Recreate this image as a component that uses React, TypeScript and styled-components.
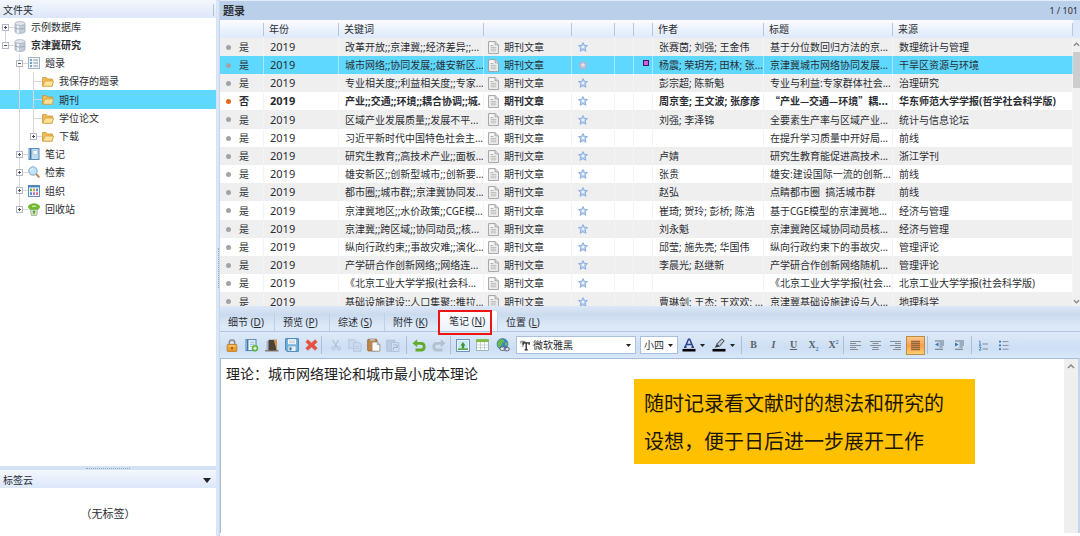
import React from 'react';
import styled, { createGlobalStyle, css } from 'styled-components';

const UI_FONT = '"Noto Sans", "Noto Sans CJK SC", sans-serif';
const CJK_FONT = '"Noto Sans CJK SC", "Noto Sans", sans-serif';

const color = {
  text: '#2b2d33',
  accent: '#5ed8fe',
  stripe: '#efefef',
  frame: '#c3d7ee',
  panel: '#bad0ea',
  bar: '#dbe8f7',
  line: '#aebfd6',
};

const GlobalStyle = createGlobalStyle`
  *, *::before, *::after { box-sizing: border-box; }
  body { margin: 0; background: #fff; color: ${color.text}; font: 10px/18px ${UI_FONT}; }
  button, select, textarea { font: inherit; color: inherit; border: 0; padding: 0; margin: 0; background: none; border-radius: 0; }
  svg { display: block; }
`;

/* ---------- frame ---------- */

const Shell = styled.div`
  display: grid;
  grid-template-columns: 216px 4px minmax(0, 1fr);
  min-height: 100vh;
`;

const Sidebar = styled.aside`
  display: flex;
  flex-direction: column;
  background: #fff;
`;

const PanelHeader = styled.header`
  display: flex;
  align-items: center;
  justify-content: space-between;
  height: 18px;
  padding: 2px 5px 0 3px;
  background: linear-gradient(#f3f7fd, #dce7fa);
`;

const PanelTitle = styled.h2`
  margin: 0;
  font-size: 10px;
  line-height: 16px;
  font-weight: 400;
`;

const HeaderTick = styled.span`
  width: 1px;
  height: 12px;
  margin-right: -3px;
  background: #b4c0d4;
`;

const VSplitter = styled.div`
  display: flex;
  align-items: center;
  justify-content: center;
  background: linear-gradient(90deg, #d3e1f2, #dfeaf8 50%, #bdd1ea);
`;

const VGrip = styled.span`
  width: 1px;
  height: 40px;
  border-left: 1px dotted #8fa9cc;
`;

const HSplitter = styled.div`
  display: flex;
  justify-content: center;
  align-items: center;
  height: 4px;
  background: #d3e2f3;
`;

const HGrip = styled.span<{ $w: number }>`
  width: ${(p) => p.$w}px;
  height: 1px;
  border-top: 1px dotted #8fa3c0;
`;

const Main = styled.main`
  display: flex;
  flex-direction: column;
  min-width: 0;
`;

/* ---------- tree ---------- */

const Tree = styled.ul`
  flex: 1;
  margin: 0;
  padding: 0;
  list-style: none;
`;

const TreeRow = styled.li<{ $selected?: boolean; $strong?: boolean }>`
  display: flex;
  align-items: center;
  height: 18px;
  font-weight: ${(p) => (p.$strong ? 700 : 400)};
  background: ${(p) => (p.$selected ? color.accent : 'transparent')};
  &:nth-child(5n) { height: 19px; }
`;

const vLine = 'linear-gradient(#d9d6e0, #d9d6e0) 5px 0 / 1px 100% no-repeat';
const vLineTop = 'linear-gradient(#d9d6e0, #d9d6e0) 5px 0 / 1px 50% no-repeat';
const vLineBottom = 'linear-gradient(#d9d6e0, #d9d6e0) 5px 100% / 1px 50% no-repeat';
const hLine = 'linear-gradient(#d9d6e0, #d9d6e0) 5px 50% / 9px 1px no-repeat';

const Guide = styled.span<{ $line?: boolean }>`
  width: 14px;
  height: 100%;
  background: ${(p) => (p.$line ? vLine : 'none')};
`;

const Branch = styled.span<{ $end?: boolean; $start?: boolean }>`
  display: flex;
  align-items: center;
  width: 14px;
  height: 100%;
  padding-left: 2px;
  background: ${(p) => (p.$end ? vLineTop : p.$start ? vLineBottom : vLine)}, ${hLine};
`;

const Toggle = styled.button`
  width: 7px;
  height: 7px;
`;

const TreeLabel = styled.span`
  display: flex;
  align-items: center;
  gap: 5px;
  white-space: nowrap;
`;

const TagMenu = styled.button`
  display: flex;
  align-items: center;
  width: 8px;
  height: 16px;
`;

const TagCloud = styled.div`
  height: 48px;
  padding-top: 17px;
  text-align: center;
  font-size: 11px;
  line-height: 18px;
`;

/* ---------- reference list ---------- */

const ListHeader = styled.header`
  display: flex;
  align-items: center;
  justify-content: space-between;
  height: 20px;
  padding: 1px 2px 0 3px;
  border-top: 1px solid #e3edf9;
  background: ${color.panel};
`;

const ListTitle = styled.h1`
  margin: 0;
  font-size: 11px;
  line-height: 18px;
  font-weight: 700;
`;

const Counter = styled.span`
  font-size: 9px;
`;

const ListPane = styled.section`
  display: flex;
  height: 286px;
  overflow: hidden;
`;

const ListTable = styled.table`
  flex: 1;
  width: 100%;
  min-width: 0;
  height: max-content;
  table-layout: fixed;
  border-collapse: separate;
  border-spacing: 0;
`;

const Col = styled.col<{ $w?: number }>`
  width: ${(p) => (p.$w ? `${p.$w}px` : 'auto')};
`;

const Th = styled.th`
  height: 18px;
  padding: 0 0 0 5px;
  text-align: left;
  font-weight: 400;
  line-height: 16px;
  white-space: nowrap;
  background: linear-gradient(90deg, #b9c6da, #b9c6da) 100% 3px / 1px 13px no-repeat,
    linear-gradient(#fbfcff, #dee9fb);
`;

const Tr = styled.tr<{ $selected?: boolean; $strong?: boolean }>`
  background: #fff;
  font-weight: ${(p) => (p.$strong ? 700 : 400)};
  &:nth-child(odd) { background: ${color.stripe}; }
  &:nth-child(5n) td { height: 19px; }
  ${(p) => p.$selected && css`
    && { background: ${color.accent}; }
    td { border-right-color: #a6e9fe; }
  `}
`;

const Td = styled.td<{ $wide?: boolean }>`
  height: 18px;
  padding: 0 0 0 6px;
  overflow: hidden;
  white-space: pre;
  border-right: 1px solid #f4f4f6;
  font-family: ${(p) => (p.$wide ? CJK_FONT : 'inherit')};
`;

const YearTd = styled(Td)`
  font-size: 11px;
`;

const StatusLine = styled.span`
  display: flex;
  align-items: center;
  gap: 8px;
`;

const Dot = styled.i<{ $hot?: boolean }>`
  width: 5px;
  height: 5px;
  border-radius: 50%;
  background: ${(p) => (p.$hot ? '#e8671c' : '#a3a3a5')};
`;

const TypeLine = styled.span`
  display: flex;
  align-items: center;
  gap: 5px;
  margin-left: -2px;
`;

const Flag = styled.i`
  display: block;
  width: 6px;
  height: 6px;
  margin: -4px 0 0 3px;
  border: 1px solid #3d1d63;
  background: #d65ae0;
`;

const ListScroll = styled.div`
  display: flex;
  flex-direction: column;
  align-items: center;
  justify-content: space-between;
  width: 7px;
  padding: 22px 0 2px;
  background: linear-gradient(#dee9fb, #dee9fb) 0 0 / 100% 18px no-repeat, #f0f0f0;
`;

const ListThumb = styled.span`
  width: 100%;
  height: 36px;
  margin: 5px 0 auto;
  background: #cdcdcd;
`;

/* ---------- tabs ---------- */

const Tabs = styled.nav`
  display: flex;
  align-items: flex-end;
  height: 26px;
  border-bottom: 1px solid #b3c6df;
  background: linear-gradient(#dce7f8, #cbdaee 35%, #dce9f8 80%);
`;

const Tab = styled.button<{ $active?: boolean }>`
  position: relative;
  flex: none;
  width: ${(p) => (p.$active ? 58 : 55)}px;
  height: 18px;
  padding-left: 8px;
  text-align: left;
  white-space: nowrap;
  line-height: 18px;
  border-right: 1px solid #c0cfe4;
  ${(p) => p.$active && css`
    height: 20px;
    padding-left: 9px;
    background: linear-gradient(#fff, #eaf2fc);
    border-radius: 2px 2px 0 0;
  `}
  &:last-of-type { border-right: 0; }
`;

const RedFrame = styled.span`
  position: absolute;
  left: -2px;
  top: -1px;
  width: 54px;
  height: 25px;
  border: 2px solid #ee1414;
  z-index: 1;
`;

/* ---------- toolbar ---------- */

const Toolbar = styled.div`
  display: flex;
  align-items: center;
  height: 26px;
  padding-left: 2px;
  background: linear-gradient(#dfeaf8, #cddff4 60%, #d8e7f8);
`;

const Group = styled.div<{ $tight?: boolean; $after?: number; $before?: number; $last?: boolean }>`
  display: flex;
  align-items: center;
  flex: none;
  gap: ${(p) => (p.$tight ? 0 : 1)}px;
  height: 18px;
  padding: 0 ${(p) => p.$after ?? 0}px 0 ${(p) => p.$before ?? 0}px;
  border-right: ${(p) => (p.$last ? '0' : '1px solid #aebfd8')};
`;

const Tool = styled.button<{ $on?: boolean }>`
  display: flex;
  align-items: center;
  justify-content: center;
  flex: none;
  width: 19px;
  height: 19px;
  ${(p) => p.$on && css`
    border: 1px solid #b98d45;
    background: linear-gradient(#fbc98a, #fb9d4a 50%, #ffcf6e);
  `}
`;

const DropTool = styled(Tool)`
  width: 29px;
  gap: 4px;
`;

const Glyph = styled.span<{ $italic?: boolean; $underline?: boolean }>`
  font: ${(p) => (p.$italic ? 'italic' : 'normal')} 700 10px/14px "Liberation Serif", serif;
  text-decoration: ${(p) => (p.$underline ? 'underline' : 'none')};
  color: #5a6068;
  sub, sup { font-size: 6px; line-height: 0; color: #4a7fb8; }
`;

const Combo = styled.label<{ $w: number; $gap: number }>`
  display: flex;
  align-items: center;
  gap: 3px;
  flex: none;
  width: ${(p) => p.$w}px;
  height: 18px;
  padding: 0 4px 0 3px;
  margin-right: ${(p) => p.$gap}px;
  border: 1px solid #a9c0df;
  background: #fff;
`;

const ComboSelect = styled.select`
  flex: 1;
  min-width: 0;
  height: 16px;
  line-height: 16px;
  appearance: none;
  outline: none;
`;

/* ---------- note editor ---------- */

const Editor = styled.section`
  position: relative;
  display: flex;
  flex: 1;
  min-height: 120px;
  margin-bottom: 3px;
  border: solid #a9bdd9;
  border-width: 1px 2px 0 1px;
  border-right-color: #c6d5e9;
`;

const NoteText = styled.textarea`
  flex: 1;
  min-width: 0;
  padding: 4px 5px;
  font-family: "Noto Sans CJK SC", sans-serif;
  font-size: 14px;
  line-height: 20px;
  color: #222;
  resize: none;
  outline: none;
  overflow: hidden;
`;

const NoteScroll = styled.div`
  display: flex;
  justify-content: center;
  width: 14px;
  padding-top: 5px;
  background: #efeff0;
`;

const Callout = styled.p`
  position: absolute;
  left: 413px;
  top: 20px;
  width: 341px;
  margin: 0;
  padding: 6px 10px 3px;
  background: #ffc000;
  color: #1c1600;
  font-size: 20px;
  line-height: 38px;
`;

/* ---------- icons ---------- */

const Caret = ({ size = 5 }: { size?: number }) => (
  <svg width={size} height={size === 5 ? 3 : 5} viewBox="0 0 6 4" preserveAspectRatio="none"><path d="M0 0h6L3 4z" fill="#222" /></svg>
);
const Chevron = ({ w, down }: { w: number; down?: boolean }) => (
  <svg width={w} height="5" viewBox="0 0 8 5" fill="none" stroke="#8b8b8b" strokeWidth="1.5">
    <path d={down ? 'M1 1l3 3 3-3' : 'M1 4l3-3 3 3'} />
  </svg>
);
const PlusMinus = ({ open }: { open?: boolean }) => (
  <svg width="7" height="7" viewBox="0 0 7 7">
    <rect x=".5" y=".5" width="6" height="6" fill="#fff" stroke="#b3b6c1" />
    <path d={open ? 'M2 3.5h3' : 'M2 3.5h3M3.5 2v3'} stroke="#4c5168" />
  </svg>
);
const Db = () => (
  <svg width="12" height="13" viewBox="0 0 12 13">
    <path d="M1 2.5v8c0 1 2.2 1.9 5 1.9s5-.9 5-1.9v-8z" fill="#c4cdd7" stroke="#98a5b3" strokeWidth=".7" />
    <path d="M3 4v8h2V4z" fill="#edf1f5" />
    <ellipse cx="6" cy="2.5" rx="5" ry="1.9" fill="#e4e9ee" stroke="#9ba8b6" strokeWidth=".7" />
    <path d="M1 6.7c1 1.7 9 1.7 10 0" fill="none" stroke="#96a3b2" strokeWidth=".9" />
  </svg>
);
const ListIcon = () => (
  <svg width="12" height="12" viewBox="0 0 12 12">
    <rect x=".5" y=".5" width="11" height="11" fill="#f4f8fb" stroke="#a2b4c4" />
    <path d="M2 3h2M2 6h2M2 9h2" stroke="#4784b5" strokeWidth="1.4" />
    <path d="M5.3 3H10M5.3 6H10M5.3 9H10" stroke="#7f94a7" />
  </svg>
);
const Folder = () => (
  <svg width="12" height="11" viewBox="0 0 12 11">
    <path d="M.6 10V1.6h3.6L5.4 3h5v7z" fill="#f1bd57" stroke="#c98e2f" strokeWidth=".8" />
    <path d="M.8 10.2L3 5h8.6l-1.5 5.2z" fill="#ffe49a" stroke="#d39d3c" strokeWidth=".8" />
  </svg>
);
const Notebook = () => (
  <svg width="12" height="12" viewBox="0 0 12 12">
    <rect x="1" y=".5" width="10" height="11" fill="#bddcf0" stroke="#5a8db8" />
    <path d="M2.7 1v10" stroke="#3f76a8" strokeWidth="1.4" />
    <rect x="5" y="2.5" width="4.5" height="4" fill="#f5fafd" stroke="#8fb5d2" strokeWidth=".5" />
  </svg>
);
const SearchIcon = () => (
  <svg width="12" height="12" viewBox="0 0 12 12">
    <path d="M7.7 7.7l3 3" stroke="#c09055" strokeWidth="2.2" strokeLinecap="round" />
    <circle cx="5" cy="5" r="4.2" fill="#bfe2f6" stroke="#85aac9" />
    <path d="M2.7 4.6c.3-1.2 1.2-1.8 2.3-1.9" stroke="#fff" fill="none" />
  </svg>
);
const Groups = () => (
  <svg width="12" height="12" viewBox="0 0 12 12">
    <rect x=".5" y=".5" width="11" height="11" fill="#f0f6fb" stroke="#5f8fbd" />
    <path d="M0 1.4h12" stroke="#4b84bb" strokeWidth="2" />
    <rect x="2" y="3.6" width="2" height="2.6" fill="#5bb455" /><rect x="5" y="3.6" width="2" height="2.6" fill="#e69a3c" /><rect x="8" y="3.6" width="2" height="2.6" fill="#5c93d8" />
    <rect x="2" y="7.3" width="2" height="2.6" fill="#5a86d8" /><rect x="5" y="7.3" width="2" height="2.6" fill="#b867c4" /><rect x="8" y="7.3" width="2" height="2.6" fill="#dd7063" />
  </svg>
);
const Bin = () => (
  <svg width="12" height="13" viewBox="0 0 12 13">
    <path d="M2.6 6h6.8l-.6 6.4H3.2z" fill="#dfe8da" stroke="#8aa27a" strokeWidth=".7" />
    <path d="M.4 3.6C.6 2.4 1.6 2 2.4 1.8 3.4.4 8.6.4 9.6 1.8c.8.2 1.8.6 2 1.8.2 1.6-1 2.6-2.4 2.6H2.8C1.4 6.200.200 5.200.400 3.600z" fill="#74bb33" stroke="#549b24" strokeWidth=".6" />
    <path d="M4 3.200h4" stroke="#d8f0bf" strokeWidth="1.200" />
    <path d="M6 7l2 2.300H4zM5.300 9h1.400v2.300H5.300z" fill="#58a527" />
  </svg>
);
const Doc = () => (
  <svg width="11" height="13" viewBox="0 0 11 13">
    <path d="M.6.6h6.5l3.3 3.2v8.6H.6z" fill="#f7f7f7" stroke="#979797" strokeWidth=".9" />
    <path d="M7 .6v3.3h3.4" fill="#ddd" stroke="#979797" strokeWidth=".8" />
    <path d="M2.500 4.500h3M2.500 6.300h6M2.500 8.100h6M2.500 9.900h6" stroke="#aaa" strokeWidth=".9" />
  </svg>
);
const Star = ({ pink }: { pink?: boolean }) => (
  <svg width="10" height="10" viewBox="0 0 10 10">
    <path d="M5 .6l1.400 2.700 3.100.300-2.200 2.200.600 3.500L5 7.700 2.100 9.300l.600-3.500L.500 3.600l3.100-.300z" fill={pink ? '#d8c6dc' : '#b3cdf1'} stroke={pink ? '#a9b4d2' : '#8fb0e0'} strokeWidth="1" strokeLinejoin="round" />
    <circle cx="5" cy="5" r="1.300" fill={pink ? '#efe2ea' : '#eef5ff'} />
  </svg>
);

const LockI = () => (
  <svg width="12" height="13" viewBox="0 0 12 13">
    <path d="M3.3 6V3.6a2.7 2.7 0 015.4 0V6" fill="none" stroke="#8f8a84" strokeWidth="1.5" />
    <rect x="1.2" y="5.4" width="9.6" height="7" rx=".7" fill="#efa02e" stroke="#b87319" strokeWidth=".8" />
    <path d="M1.8 7h8.4" stroke="#ffd27c" /><path d="M6 8v2.5" stroke="#7c4a10" strokeWidth="1.3" />
  </svg>
);
const AddNoteI = () => (
  <svg width="14" height="13" viewBox="0 0 14 13">
    <rect x="1" y=".6" width="10" height="11" fill="#e8f3fb" stroke="#5387b5" />
    <path d="M2.6 1v10.4" stroke="#3c78ad" strokeWidth="1.6" />
    <path d="M5 3.3h4.5M5 5.3h4.5M5 7.3h2" stroke="#87aecb" strokeWidth=".8" />
    <circle cx="10" cy="9.3" r="3.2" fill="#5db53a" /><path d="M10 7.5v3.6M8.2 9.3h3.6" stroke="#fff" strokeWidth="1.1" />
  </svg>
);
const DoorI = () => (
  <svg width="14" height="13" viewBox="0 0 14 13">
    <path d="M1.5 2h4v9h-4z" fill="#a9b6c6" /><path d="M3.5 .8h8v11h-8z" fill="#4c4239" />
    <path d="M8.8.8h3v11.5z" fill="#d5994d" /><path d="M0 11.8h13.5" stroke="#786755" strokeWidth="1.2" />
  </svg>
);
const SaveI = () => (
  <svg width="14" height="14" viewBox="0 0 14 14">
    <path d="M.7.7h12.6v12.6H2L.7 12z" fill="#79b3dc" stroke="#3a7db3" />
    <rect x="3" y="1.2" width="8" height="5" fill="#f7fafc" /><path d="M4 3h6M4 4.7h6" stroke="#a2b9c9" strokeWidth=".7" />
    <rect x="3.4" y="8.4" width="7.2" height="4.6" fill="#e7f0f6" /><rect x="4.5" y="9.3" width="2" height="3" fill="#3a6f9e" />
  </svg>
);
const DeleteI = () => (
  <svg width="13" height="12" viewBox="0 0 14 13">
    <path d="M3 .8L7 4.3 11 .8l2.2 2.500L9.6 6.5l3.6 3.3-2.3 2.5L7 8.8l-4 3.5L.8 9.8l3.6-3.3L.8 3.2z" fill="#e8513f" stroke="#d2493a" strokeWidth=".6" />
  </svg>
);
const CutI = () => (
  <svg width="12" height="12" viewBox="0 0 12 12" fill="none" stroke="#b2c2d8">
    <path d="M2.5 1l5 7.3M8.5 1L4.7 8" strokeWidth="1.3" /><circle cx="3.4" cy="9.4" r="1.6" /><circle cx="9" cy="9.4" r="1.6" />
  </svg>
);
const CopyI = () => (
  <svg width="14" height="13" viewBox="0 0 14 13" fill="#cbdaed" stroke="#b4c5dc" strokeWidth=".9">
    <path d="M.7.7h6L8 2.3v7H.7z" /><path d="M5.7 3.7h6L13 5.3v7H5.7z" /><path d="M7.3 7.5h4M7.3 9.5h4" />
  </svg>
);
const PasteI = () => (
  <svg width="14" height="14" viewBox="0 0 14 14">
    <rect x=".7" y="1.3" width="9.3" height="11.6" rx=".8" fill="#c28743" stroke="#8d5f2b" strokeWidth=".8" />
    <rect x="3" y=".4" width="4.6" height="2.4" fill="#b8bcc2" />
    <path d="M5 4h5.3l2.6 2.6v6.6H5z" fill="#fbfbfb" stroke="#92877a" strokeWidth=".8" /><path d="M10.3 4v2.6h2.6" fill="none" stroke="#92877a" strokeWidth=".7" />
  </svg>
);
const PasteSpecialI = () => (
  <svg width="14" height="13" viewBox="0 0 14 13" stroke="#abbdd6" strokeWidth=".9">
    <rect x=".8" y="1.2" width="8" height="11" fill="#bdcee4" /><path d="M5.4 3.6h7.5v8.8H5.4z" fill="#d4e1f1" />
    <path d="M7.3 6h4v2.5h-4V11" fill="none" stroke="#96abc8" />
  </svg>
);
const UndoI = ({ redo }: { redo?: boolean }) => (
  <svg width="14" height="13" viewBox="0 0 14 13">
    <g transform={redo ? 'matrix(-1 0 0 1 14 0)' : undefined} fill="none">
      <path d="M3 4.3h6.2c4 0 4 6.7 0 6.7H3.5" stroke={redo ? '#b3c0ce' : '#62aa2c'} strokeWidth="2.8" />
      <path d="M.5 4.3L5.2.3v8z" fill={redo ? '#b3c0ce' : '#62ad2a'} />
    </g>
  </svg>
);
const ImageI = () => (
  <svg width="14" height="13" viewBox="0 0 14 13">
    <rect x=".6" y=".6" width="12.8" height="11.8" fill="#fafdff" stroke="#638eb5" />
    <rect x="2" y="2" width="10" height="9" fill="#cbe8f8" /><path d="M2 11V9.3h10V11z" fill="#5ea748" />
    <path d="M7 3l2.5 3.5H8.2v2.7H5.8V6.5H4.5z" fill="#409338" />
  </svg>
);
const TableI = () => (
  <svg width="13" height="12" viewBox="0 0 13 12">
    <rect x=".5" y=".5" width="12" height="11" fill="#fff" stroke="#91a5ae" strokeWidth=".8" />
    <path d="M.3.3h12.4v2.8H.3z" fill="#80bd3f" /><path d="M.5 6h12M.5 8.7h12M4.5 3v8.5M8.5 3v8.5" stroke="#b3c1c6" strokeWidth=".7" />
  </svg>
);
const GlobeI = () => (
  <svg width="14" height="14" viewBox="0 0 14 14">
    <circle cx="6.5" cy="6" r="5.5" fill="#3b87c8" stroke="#2c6498" strokeWidth=".6" />
    <path d="M2.5 2.8c2-2.4 5.6-2 6 .2.2 1.3-2.4 1-2.5 2.9S3.4 8 3.3 10C1.6 8.7.6 5 2.5 2.8z" fill="#67b948" />
    <path d="M9.5 4l2 1-.4 3-2-1z" fill="#74c251" />
    <rect x="4" y="9" width="5.3" height="3.4" rx="1.7" fill="#eee" stroke="#606874" /><rect x="8" y="9.4" width="5.3" height="3.4" rx="1.7" fill="none" stroke="#606874" />
  </svg>
);
const FontColorI = () => (
  <svg width="14" height="14" viewBox="0 0 14 14">
    <path d="M3 9.2L6.5 1.2h1.2l3.4 8M4.4 6.4h5M2 9.2h2.6M9.4 9.2H12" fill="none" stroke="#2c3f90" strokeWidth="1.5" />
    <path d="M.5 12.2h13" stroke="#000" strokeWidth="2.6" />
  </svg>
);
const PenI = () => (
  <svg width="14" height="14" viewBox="0 0 14 14">
    <path d="M4.6 6.2L9.8.8l2.4 2L7.5 8.4z" fill="#bfc8d2" stroke="#3d444d" /><path d="M4.6 6.2l2.9 2.2-4.8 1.3z" fill="#343a42" />
    <path d="M.5 12.2h13" stroke="#000" strokeWidth="2.6" />
  </svg>
);
const TypeI = () => (
  <svg width="10" height="11" viewBox="0 0 10 11" fill="none">
    <path d="M.8 3.5V1.3H5v2M2.9 1.3V7" stroke="#777" /><path d="M3.2 4.8V2.8h6v2M6.2 2.8v7M4.6 9.9h3.2" stroke="#252525" strokeWidth="1.3" />
  </svg>
);
const AlignI = ({ kind }: { kind: 'left' | 'center' | 'right' | 'full' }) => {
  const d = {
    left: 'M0 1.5h11M0 3.5h6M0 5.5h11M0 7.5h6M0 9.5h8',
    center: 'M0 1.5h11M2.5 3.5h6M0 5.5h11M2.5 7.5h6M2 9.5h7',
    right: 'M0 1.5h11M5 3.5h6M0 5.5h11M5 7.5h6M3 9.5h8',
    full: 'M1 1.5h9M1 3.5h9M1 5.5h9M1 7.5h9M1 9.5h9',
  }[kind];
  return <svg width="11" height="11" viewBox="0 0 11 11"><path d={d} stroke={kind === 'full' ? '#96683a' : '#868c95'} strokeWidth={kind === 'full' ? 1.4 : 1.1} /></svg>;
};
const IndentI = ({ out }: { out?: boolean }) => (
  <svg width="11" height="11" viewBox="0 0 11 11">
    <path d="M1 1h9M5.5 3h4.5M5.5 5h4.5M5.5 7h3M1 9.2h8" stroke="#6d7682" strokeWidth="1.1" />
    <path d={out ? 'M4.5 2.6v4L1 4.6z' : 'M1 2.6v4l3.5-2z'} fill="#2f76bd" />
  </svg>
);
const NumberedI = () => (
  <svg width="11" height="11" viewBox="0 0 11 11" fill="none">
    <path d="M1 1.2h1v4M1 5.2h2.3M.8 7h2v1.2L1 10h2.3" stroke="#4884c0" strokeWidth="1" /><path d="M4.5 4h5.5M4.5 9h5.5" stroke="#7d8793" />
  </svg>
);
const BulletedI = () => (
  <svg width="11" height="11" viewBox="0 0 11 11">
    <path d="M1 1.6h2M1 5.4h2M1 9.2h2" stroke="#3779bd" strokeWidth="1.8" /><path d="M4.5 1.6h6M4.5 5.4h6M4.5 9.2h6" stroke="#8790a0" />
  </svg>
);

/* ---------- data ---------- */

type TreeNode = {
  label: string;
  level: number;
  icon: React.ReactNode;
  state?: 'open' | 'closed';
  start?: boolean;
  end?: boolean;
  strong?: boolean;
  selected?: boolean;
};

const nodes: TreeNode[] = [
  { label: '示例数据库', level: 0, icon: <Db />, state: 'closed', start: true },
  { label: '京津冀研究', level: 0, icon: <Db />, state: 'open', end: true, strong: true },
  { label: '题录', level: 1, icon: <ListIcon />, state: 'open' },
  { label: '我保存的题录', level: 2, icon: <Folder /> },
  { label: '期刊', level: 2, icon: <Folder />, selected: true },
  { label: '学位论文', level: 2, icon: <Folder /> },
  { label: '下载', level: 2, icon: <Folder />, state: 'closed', end: true },
  { label: '笔记', level: 1, icon: <Notebook />, state: 'closed' },
  { label: '检索', level: 1, icon: <SearchIcon />, state: 'closed' },
  { label: '组织', level: 1, icon: <Groups />, state: 'closed' },
  { label: '回收站', level: 1, icon: <Bin />, state: 'closed', end: true },
];

type Reference = { keys: string; authors: string; title: string; source: string; unread?: boolean; selected?: boolean };

const refs: Reference[] = [
  { keys: '改革开放;;京津冀;;经济差异;;...', authors: '张赛茵; 刘强; 王金伟', title: '基于分位数回归方法的京...', source: '数理统计与管理' },
  { keys: '城市网络;;协同发展;;雄安新区...', authors: '杨震; 荣玥芳; 田林; 张...', title: '京津冀城市网络协同发展...', source: '干旱区资源与环境', selected: true },
  { keys: '专业相关度;;利益相关度;;专家...', authors: '彭宗超; 陈新魁', title: '专业与利益:专家群体社会...', source: '治理研究' },
  { keys: '产业;;交通;;环境;;耦合协调;;城.', authors: '周京奎; 王文波; 张彦彦', title: '“产业—交通—环境”耦...', source: '华东师范大学学报(哲学社会科学版)', unread: true },
  { keys: '区域产业发展质量;;发展不平...', authors: '刘强; 李泽锦', title: '全要素生产率与区域产业...', source: '统计与信息论坛' },
  { keys: '习近平新时代中国特色社会主...', authors: '', title: '在提升学习质量中开好局...', source: '前线' },
  { keys: '研究生教育;;高技术产业;;面板...', authors: '卢婧', title: '研究生教育能促进高技术...', source: '浙江学刊' },
  { keys: '雄安新区;;创新型城市;;创新要...', authors: '张贵', title: '雄安:建设国际一流的创新...', source: '前线' },
  { keys: '都市圈;;城市群;;京津冀协同发...', authors: '赵弘', title: '点睛都市圈  搞活城市群', source: '前线' },
  { keys: '京津冀地区;;水价政策;;CGE模...', authors: '崔琦; 贺玲; 彭桥; 陈浩', title: '基于CGE模型的京津冀地...', source: '经济与管理' },
  { keys: '京津冀;;跨区域;;协同动员;;核...', authors: '刘永魁', title: '京津冀跨区域协同动员核...', source: '经济与管理' },
  { keys: '纵向行政约束;;事故灾难;;演化...', authors: '邱莹; 施先亮; 华国伟', title: '纵向行政约束下的事故灾...', source: '管理评论' },
  { keys: '产学研合作创新网络;;网络连...', authors: '李晨光; 赵继新', title: '产学研合作创新网络随机...', source: '管理评论' },
  { keys: '《北京工业大学学报(社会科...', authors: '', title: '《北京工业大学学报(社会...', source: '北京工业大学学报(社会科学版)' },
  { keys: '基础设施建设;;人口集聚;;推拉...', authors: '曹琳剑; 王杰; 王欢欢; ...', title: '京津冀基础设施建设与人...', source: '地理科学' },
];

const columns: { label: string; w?: number }[] = [
  { label: '', w: 44 }, { label: '年份', w: 75 }, { label: '关键词', w: 145 }, { label: '', w: 88 }, { label: '', w: 43 },
  { label: '', w: 19 }, { label: '', w: 19 }, { label: '作者', w: 111 }, { label: '标题', w: 129 }, { label: '来源' },
];

const tabs = [
  ['细节', 'D'], ['预览', 'P'], ['综述', 'S'], ['附件', 'K'], ['笔记', 'N'], ['位置', 'L'],
];

/* ---------- page ---------- */

export default function App() {
  return (
    <>
      <GlobalStyle />
      <Shell>
        <Sidebar>
          <PanelHeader><PanelTitle>文件夹</PanelTitle><HeaderTick /></PanelHeader>
          <Tree>
            {nodes.map((n) => (
              <TreeRow key={n.label} $selected={n.selected} $strong={n.strong}>
                {n.level > 0 && <Guide />}
                {n.level > 1 && <Guide $line />}
                <Branch $end={n.end} $start={n.start}>
                  {n.state && (
                    <Toggle type="button" aria-label={`${n.label} ${n.state === 'open' ? '收起' : '展开'}`}>
                      <PlusMinus open={n.state === 'open'} />
                    </Toggle>
                  )}
                </Branch>
                <TreeLabel>{n.icon}<span>{n.label}</span></TreeLabel>
              </TreeRow>
            ))}
          </Tree>
          <HSplitter><HGrip $w={44} /></HSplitter>
          <PanelHeader>
            <PanelTitle>标签云</PanelTitle>
            <TagMenu type="button" aria-label="标签云菜单"><Caret size={8} /></TagMenu>
          </PanelHeader>
          <TagCloud>（无标签）</TagCloud>
        </Sidebar>

        <VSplitter><VGrip /></VSplitter>

        <Main>
          <ListHeader><ListTitle>题录</ListTitle><Counter>1 / 101</Counter></ListHeader>
          <ListPane>
            <ListTable>
              <colgroup>{columns.map((c, i) => <Col key={i} $w={c.w} />)}</colgroup>
              <thead><tr>{columns.map((c, i) => <Th key={i}>{c.label}</Th>)}</tr></thead>
              <tbody>
                {refs.map((r) => (
                  <Tr key={r.keys} $selected={r.selected} $strong={r.unread}>
                    <Td><StatusLine><Dot $hot={r.unread} />{r.unread ? '否' : '是'}</StatusLine></Td>
                    <YearTd>2019</YearTd>
                    <Td>{r.keys}</Td>
                    <Td><TypeLine><Doc />期刊文章</TypeLine></Td>
                    <Td><Star pink={r.selected} /></Td>
                    <Td />
                    <Td>{r.selected && <Flag />}</Td>
                    <Td>{r.authors}</Td>
                    <Td $wide={r.unread}>{r.title}</Td>
                    <Td>{r.source}</Td>
                  </Tr>
                ))}
              </tbody>
            </ListTable>
            <ListScroll><Chevron w={7} /><ListThumb /><Chevron w={7} down /></ListScroll>
          </ListPane>

          <Tabs>
            {tabs.map(([name, key]) => (
              <Tab key={key} type="button" $active={key === 'N'}>
                {name} (<u>{key}</u>)
                {key === 'N' && <RedFrame />}
              </Tab>
            ))}
          </Tabs>

          <Toolbar>
            <Group>
              <Tool aria-label="锁定"><LockI /></Tool>
              <Tool aria-label="新建笔记"><AddNoteI /></Tool>
              <Tool aria-label="关闭笔记"><DoorI /></Tool>
              <Tool aria-label="保存"><SaveI /></Tool>
              <Tool aria-label="删除"><DeleteI /></Tool>
            </Group>
            <Group $tight $before={4} $after={4}>
              <Tool aria-label="剪切"><CutI /></Tool>
              <Tool aria-label="复制"><CopyI /></Tool>
              <Tool aria-label="粘贴"><PasteI /></Tool>
              <Tool aria-label="选择性粘贴"><PasteSpecialI /></Tool>
            </Group>
            <Group $before={2} $after={2}>
              <Tool aria-label="撤销"><UndoI /></Tool>
              <Tool aria-label="重做"><UndoI redo /></Tool>
            </Group>
            <Group $before={2} $after={4} $last>
              <Tool aria-label="插入图片"><ImageI /></Tool>
              <Tool aria-label="插入表格"><TableI /></Tool>
              <Tool aria-label="插入链接"><GlobeI /></Tool>
            </Group>
            <Combo $w={120} $gap={4}>
              <TypeI />
              <ComboSelect aria-label="字体"><option>微软雅黑</option></ComboSelect>
              <Caret />
            </Combo>
            <Combo $w={38} $gap={1}>
              <ComboSelect aria-label="字号"><option>小四</option></ComboSelect>
              <Caret />
            </Combo>
            <Group $after={3}>
              <DropTool aria-label="字体颜色"><FontColorI /><Caret /></DropTool>
              <DropTool aria-label="突出显示"><PenI /><Caret /></DropTool>
            </Group>
            <Group $before={2}>
              <Tool aria-label="加粗"><Glyph>B</Glyph></Tool>
              <Tool aria-label="斜体"><Glyph $italic>I</Glyph></Tool>
              <Tool aria-label="下划线"><Glyph $underline>U</Glyph></Tool>
              <Tool aria-label="下标"><Glyph>X<sub>2</sub></Glyph></Tool>
              <Tool aria-label="上标"><Glyph>X<sup>2</sup></Glyph></Tool>
            </Group>
            <Group $before={2} $after={2}>
              <Tool aria-label="左对齐"><AlignI kind="left" /></Tool>
              <Tool aria-label="居中"><AlignI kind="center" /></Tool>
              <Tool aria-label="右对齐"><AlignI kind="right" /></Tool>
              <Tool aria-label="两端对齐" $on><AlignI kind="full" /></Tool>
            </Group>
            <Group $before={2} $after={2}>
              <Tool aria-label="减少缩进"><IndentI out /></Tool>
              <Tool aria-label="增加缩进"><IndentI /></Tool>
            </Group>
            <Group $before={2} $last>
              <Tool aria-label="编号"><NumberedI /></Tool>
              <Tool aria-label="项目符号"><BulletedI /></Tool>
            </Group>
          </Toolbar>

          <Editor>
            <NoteText aria-label="笔记内容" spellCheck={false} defaultValue="理论：城市网络理论和城市最小成本理论" />
            <NoteScroll><Chevron w={8} /></NoteScroll>
            <Callout>随时记录看文献时的想法和研究的<br />设想，便于日后进一步展开工作</Callout>
          </Editor>
        </Main>
      </Shell>
    </>
  );
}
